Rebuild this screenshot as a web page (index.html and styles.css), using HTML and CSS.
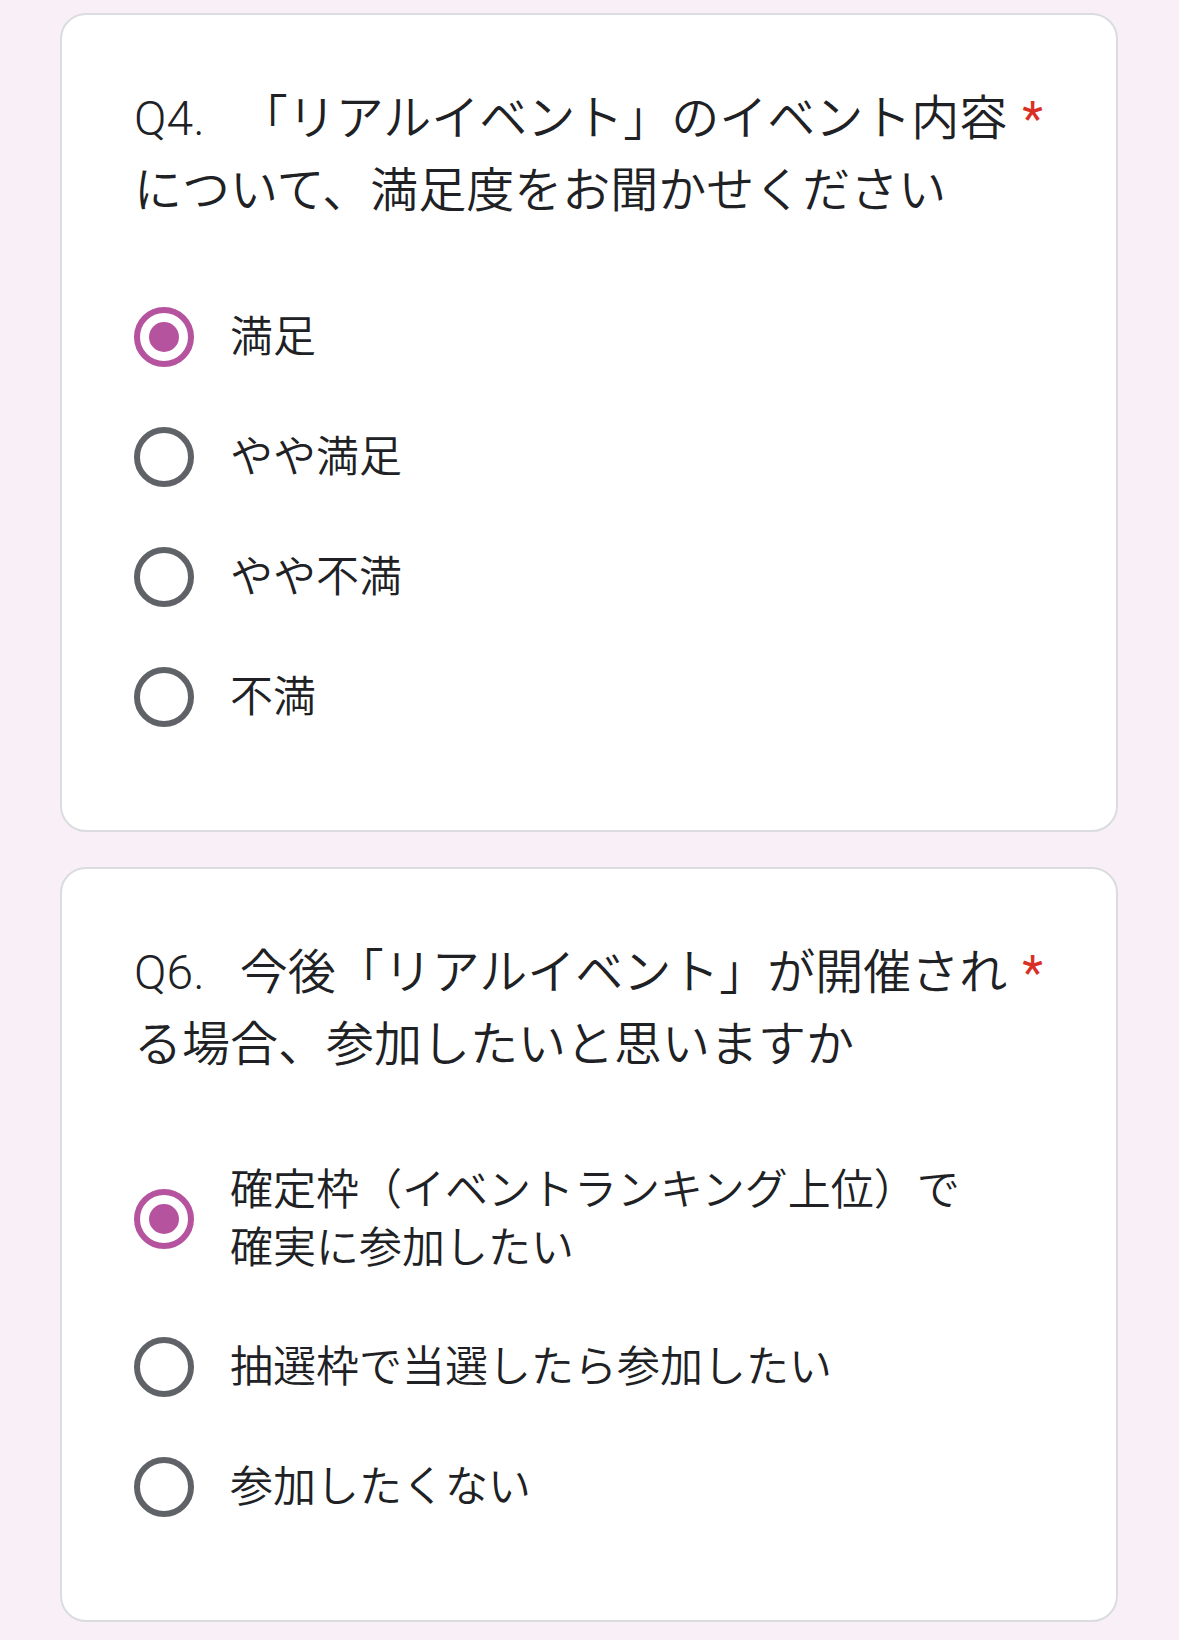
FILE: index.html
```html
<html>
    <head>
        <meta charset="utf-8">
        <link rel="stylesheet" href="styles.css">
    </head>
    <body>
        <div class="page">
            <div class="card">
                <div class="title">
                    <span class="qtext">Q4.   「リアルイベント」のイベント内容について、満足度をお聞かせください</span>
                    <span class="req">*</span>
                </div>
                <div class="options">
                    <label class="option"><span class="radio checked"></span><span class="label">満足</span></label>
                    <label class="option"><span class="radio"></span><span class="label">やや満足</span></label>
                    <label class="option"><span class="radio"></span><span class="label">やや不満</span></label>
                    <label class="option"><span class="radio"></span><span class="label">不満</span></label>
                </div>
            </div>
            <div class="card">
                <div class="title">
                    <span class="qtext">Q6.   今後「リアルイベント」が開催される場合、参加したいと思いますか</span>
                    <span class="req">*</span>
                </div>
                <div class="options">
                    <label class="option"><span class="radio checked"></span><span class="label">確定枠（イベントランキング上位）で確実に参加したい</span></label>
                    <label class="option"><span class="radio"></span><span class="label">抽選枠で当選したら参加したい</span></label>
                    <label class="option"><span class="radio"></span><span class="label">参加したくない</span></label>
                </div>
            </div>
        </div>
    </body>
</html>
```

FILE: styles.css
```css
body {
    margin: 0;
    background-color: #f9f0f7;
    font-family: Roboto, "Noto Sans CJK JP", sans-serif;
    font-weight: 350;
    color: #202124;
}
.page {
    padding: 13px 61px 20px 60px;
    display: flex;
    flex-direction: column;
    gap: 35px;
}
.card {
    background-color: white;
    border: 2px solid #dadce0;
    border-radius: 26px;
    padding: 68px 73px 73px 72px;
}
.title {
    display: flex;
    font-size: 48px;
    line-height: 72px;
}
.qtext {
    flex: 1;
    white-space: pre-wrap;
}
.req {
    color: #d93025;
    font-weight: 400;
    padding-left: 12px;
}
.options {
    margin-top: 50px;
}
.option {
    display: flex;
    align-items: center;
    gap: 36px;
    padding: 30px 0;
}
.radio {
    flex: none;
    width: 60px;
    height: 60px;
    box-sizing: border-box;
    border: 6px solid #5f6368;
    border-radius: 50%;
    display: flex;
    align-items: center;
    justify-content: center;
}
.radio.checked {
    border-color: #b5539f;
}
.radio.checked::after {
    content: "";
    width: 30px;
    height: 30px;
    border-radius: 50%;
    background-color: #b5539f;
}
.label {
    font-size: 43px;
    line-height: 58px;
    max-width: 760px;
}
```
